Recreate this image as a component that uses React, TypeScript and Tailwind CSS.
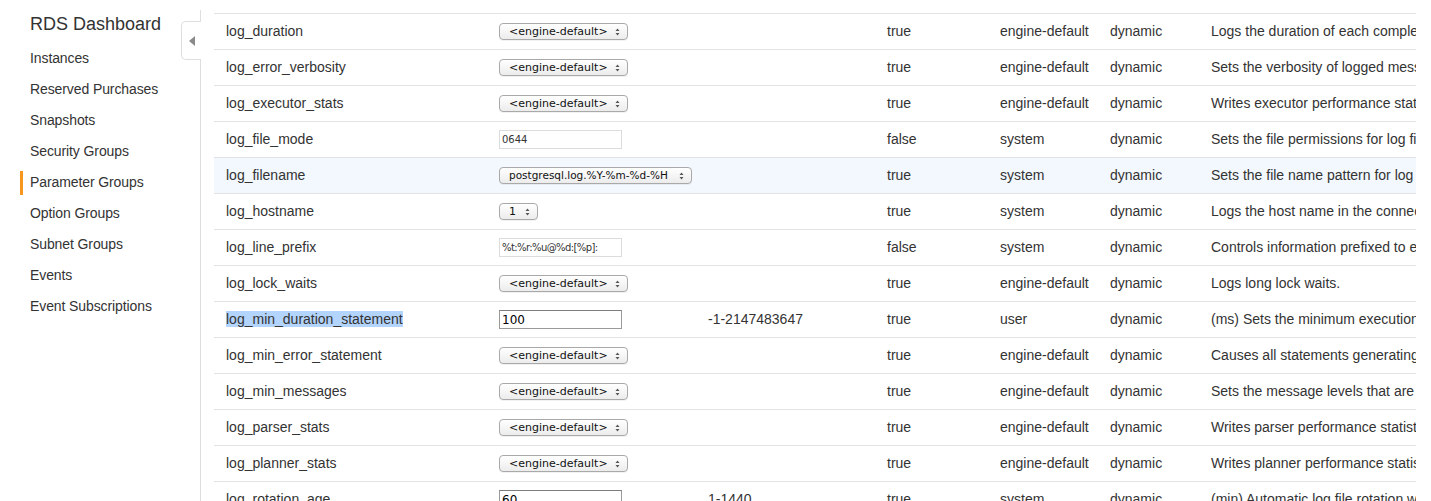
import React from 'react';

type Row = {
  name: string;
  kind: 'select' | 'input';
  value: string;
  width?: number;
  focused?: boolean;
  allowed: string;
  modifiable: string;
  source: string;
  apply: string;
  desc: string;
  active?: boolean;
  selected?: boolean;
};

const rows: Row[] = [
  { name: 'log_duration', kind: 'select', value: '<engine-default>', allowed: '', modifiable: 'true', source: 'engine-default', apply: 'dynamic', desc: 'Logs the duration of each completed SQL statement.' },
  { name: 'log_error_verbosity', kind: 'select', value: '<engine-default>', allowed: '', modifiable: 'true', source: 'engine-default', apply: 'dynamic', desc: 'Sets the verbosity of logged messages.' },
  { name: 'log_executor_stats', kind: 'select', value: '<engine-default>', allowed: '', modifiable: 'true', source: 'engine-default', apply: 'dynamic', desc: 'Writes executor performance statistics to the server log.' },
  { name: 'log_file_mode', kind: 'input', value: '0644', allowed: '', modifiable: 'false', source: 'system', apply: 'dynamic', desc: 'Sets the file permissions for log files.' },
  { name: 'log_filename', kind: 'select', value: 'postgresql.log.%Y-%m-%d-%H', width: 193, allowed: '', modifiable: 'true', source: 'system', apply: 'dynamic', desc: 'Sets the file name pattern for log files.', active: true },
  { name: 'log_hostname', kind: 'select', value: '1', width: 39, allowed: '', modifiable: 'true', source: 'system', apply: 'dynamic', desc: 'Logs the host name in the connection logs.' },
  { name: 'log_line_prefix', kind: 'input', value: '%t:%r:%u@%d:[%p]:', allowed: '', modifiable: 'false', source: 'system', apply: 'dynamic', desc: 'Controls information prefixed to each log line.' },
  { name: 'log_lock_waits', kind: 'select', value: '<engine-default>', allowed: '', modifiable: 'true', source: 'engine-default', apply: 'dynamic', desc: 'Logs long lock waits.' },
  { name: 'log_min_duration_statement', kind: 'input', value: '100', focused: true, allowed: '-1-2147483647', modifiable: 'true', source: 'user', apply: 'dynamic', desc: '(ms) Sets the minimum execution time above which statements will be logged.', selected: true },
  { name: 'log_min_error_statement', kind: 'select', value: '<engine-default>', allowed: '', modifiable: 'true', source: 'engine-default', apply: 'dynamic', desc: 'Causes all statements generating error at or above this level to be logged.' },
  { name: 'log_min_messages', kind: 'select', value: '<engine-default>', allowed: '', modifiable: 'true', source: 'engine-default', apply: 'dynamic', desc: 'Sets the message levels that are logged.' },
  { name: 'log_parser_stats', kind: 'select', value: '<engine-default>', allowed: '', modifiable: 'true', source: 'engine-default', apply: 'dynamic', desc: 'Writes parser performance statistics to the server log.' },
  { name: 'log_planner_stats', kind: 'select', value: '<engine-default>', allowed: '', modifiable: 'true', source: 'engine-default', apply: 'dynamic', desc: 'Writes planner performance statistics to the server log.' },
  { name: 'log_rotation_age', kind: 'input', value: '60', focused: true, allowed: '1-1440', modifiable: 'true', source: 'system', apply: 'dynamic', desc: '(min) Automatic log file rotation will occur after N minutes.' },
];

const navItems = [
  'Instances',
  'Reserved Purchases',
  'Snapshots',
  'Security Groups',
  'Parameter Groups',
  'Option Groups',
  'Subnet Groups',
  'Events',
  'Event Subscriptions',
];

function Arrows() {
  return (
    <svg width="5" height="8" viewBox="0 0 5 8" className="shrink-0">
      <path d="M2.5 0.5 L4.5 3 L0.5 3 Z" fill="#555" />
      <path d="M2.5 7.5 L4.5 5 L0.5 5 Z" fill="#555" />
    </svg>
  );
}

function FakeSelect({ value, width = 129 }: { value: string; width?: number }) {
  return (
    <div
      className="flex h-[17px] items-center justify-between rounded-[4px] border border-[#a9a9a9] bg-gradient-to-b from-white to-[#ececec] pl-[9px] pr-[7px] text-[11px] leading-none text-[#111] shadow-[0_1px_0_rgba(0,0,0,0.05)]"
      style={{ width, fontFamily: '"DejaVu Sans", sans-serif', fontSize: value.length > 20 ? 10.5 : 11 }}
    >
      <span className="whitespace-nowrap">{value}</span>
      <Arrows />
    </div>
  );
}

function FakeInput({ value, focused }: { value: string; focused?: boolean }) {
  return (
    <div
      className={
        focused
          ? 'flex h-[19px] w-[123px] items-center border border-[#9a9a9a] border-t-[#7d7d7d] bg-white pl-[2px] text-[12px] text-black'
          : 'flex h-[19px] w-[123px] items-center border border-[#dcdcdc] bg-white pl-[2px] text-[10px] text-[#333]'
      }
      style={{ fontFamily: '"DejaVu Sans", sans-serif', letterSpacing: value.length > 10 ? '-0.6px' : undefined }}
    >
      {value}
    </div>
  );
}

export default function App() {
  return (
    <div
      className="flex h-[501px] w-[1431px] overflow-hidden bg-white text-[14px] text-[#333]"
      style={{ fontFamily: '"Liberation Sans", Arial, sans-serif' }}
    >
      <aside className="relative w-[201px] shrink-0 pt-[12px]">
        <div className="absolute right-0 top-[10px] bottom-0 w-px bg-[#dedede]" />
        <div className="absolute right-0 top-[21px] flex h-[39px] w-[20px] items-center justify-center rounded-l-[5px] border border-r-0 border-[#dedede] bg-white">
          <svg width="6" height="10" viewBox="0 0 6 10">
            <path d="M6 0 L0 5 L6 10 Z" fill="#8a8a8a" />
          </svg>
        </div>
        <h1 className="pl-[30px] text-[18px] leading-[25px] text-[#333]">RDS Dashboard</h1>
        <nav className="mt-[6px] flex flex-col">
          {navItems.map((item) => (
            <div key={item} className="flex h-[31px] items-center">
              <div className={item === 'Parameter Groups' ? 'ml-[20px] h-[24px] w-[3px] bg-[#f7961c]' : 'ml-[20px] h-[24px] w-[3px]'} />
              <span className="pl-[7px] tracking-[-0.1px] text-[#333]">{item}</span>
            </div>
          ))}
        </nav>
      </aside>

      <main className="min-w-0 flex-1 pl-[13px] pt-[13px]">
        <div className="w-[1202px] overflow-hidden">
          {rows.map((r) => (
            <div
              key={r.name}
              className={
                'grid h-[36px] grid-cols-[273px_209px_179px_113px_110px_101px_217px] items-center border-t border-[#e3e3e3] ' +
                (r.active ? 'bg-[#f2f8fd]' : 'bg-white')
              }
            >
              <div className="pl-[12px]">
                {r.selected ? <span className="bg-[#b3d4fc]">{r.name}</span> : r.name}
              </div>
              <div className="pl-[12px]">
                {r.kind === 'select' ? <FakeSelect value={r.value} width={r.width} /> : <FakeInput value={r.value} focused={r.focused} />}
              </div>
              <div className="pl-[12px]">{r.allowed}</div>
              <div className="pl-[12px]">{r.modifiable}</div>
              <div className="pl-[12px]">{r.source}</div>
              <div className="pl-[12px]">{r.apply}</div>
              <div className="overflow-hidden whitespace-nowrap pl-[12px]">{r.desc}</div>
            </div>
          ))}
        </div>
      </main>
    </div>
  );
}
